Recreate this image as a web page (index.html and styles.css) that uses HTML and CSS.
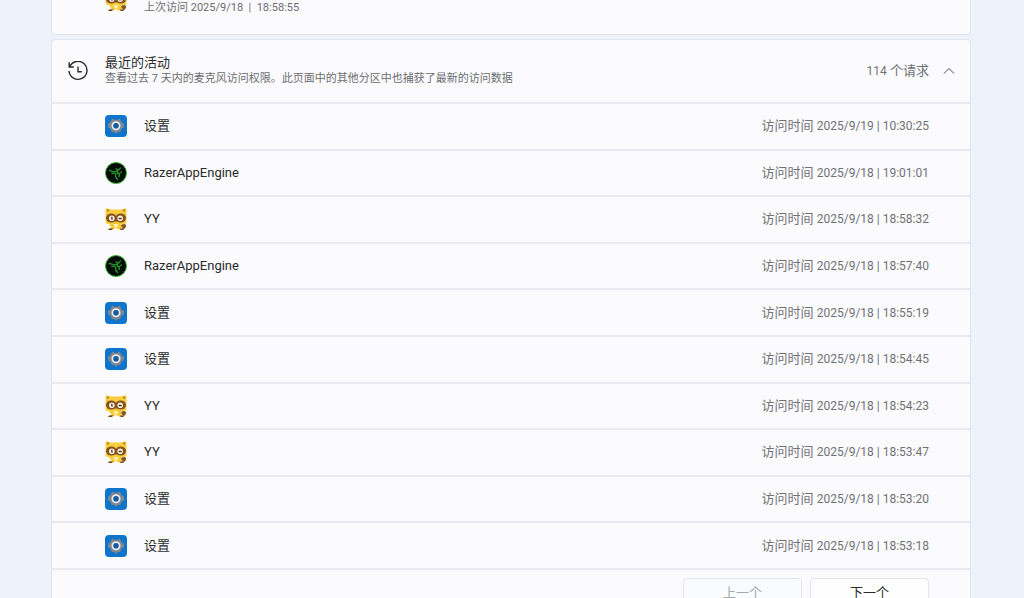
FILE: index.html
```html
<!DOCTYPE html>
<html lang="zh-CN">
<head>
    <meta charset="UTF-8">
    <meta name="viewport" content="width=device-width, initial-scale=1.0">
    <title>麦克风</title>
    <link rel="stylesheet" href="styles.css">
</head>
<body>

<!-- shared icons -->
<svg class="sprite" aria-hidden="true">
    <symbol id="icon-settings" viewBox="0 0 24 24">
        <rect x="1" y="1" width="22" height="22" rx="4" fill="#0f75cc"/>
        <path d="M8.200 4.500l2.300 1.300h3l2.300-1.300 1.700 3.700 2.500 1.300v4l-2.500 1-1.200 3.500h-2.600L12 20l-1.700-2H7.700l-1.200-3.500-2.500-1v-4l2.500-1.300z" fill="#7f868d"/>
        <circle cx="12" cy="11.800" r="4.500" fill="#e6edf4"/>
        <circle cx="12" cy="11.800" r="2.800" fill="#155a9c"/>
    </symbol>
    <symbol id="icon-razer" viewBox="0 0 24 24">
        <circle cx="12" cy="12" r="10.500" fill="#050b06" stroke="#35b52f" stroke-width="1"/>
        <g fill="none" stroke="#24922a" stroke-width="1.400" stroke-linecap="round">
            <path d="M5.500 9.500c2 .3 3.500 1.500 6 1.300 2-.2 3-2 5-3.800"/>
            <path d="M12 8c2 0 1.500 1.500 1.500 3.500s2 1 4-.5"/>
            <path d="M8 12.500c1.500-.5 3-.5 3.500.5s-.5 2 .5 3.500 1.500 1 1.500 2"/>
            <path d="M13.500 12.500c2 .5 2.500 1.500 1.500 3"/>
        </g>
    </symbol>
    <symbol id="icon-yy" viewBox="0 0 24 24">
        <path d="M1.500 3q0-2.300 2-1.500L7 2.500h10l3.500-1q2-.8 2 1.500V15q0 2-2.500 2H4q-2.500 0-2.500-2z" fill="#f9cd3d"/>
        <path d="M2.800 2.600l2.800.5-2.300 2zM21.200 2.600l-2.800.5 2.300 2z" fill="#a9731f"/>
        <path d="M7 16h10l1.500 3-1.500 3.500h-2L12 21l-3 1.500H6L7.500 20 5 18z" fill="#f6ca36"/>
        <path d="M9.500 17h5l-1 3.500h-3z" fill="#fbedaa"/>
        <path d="M17 18.500q3-2.500 5-.5c.5 2-1 4-3 4z" fill="#8a561f"/>
        <path d="M5 21.500l-1 1.500h4l1-1.800zM16 21.500l.5 1.500h3.500l-1-1.500z" fill="#75491e"/>
        <ellipse cx="7.300" cy="11" rx="5.300" ry="4.600" fill="#85501f"/>
        <ellipse cx="16.700" cy="11" rx="5.300" ry="4.600" fill="#85501f"/>
        <circle cx="7.800" cy="11.300" r="2.800" fill="#f8f1df"/>
        <circle cx="16.200" cy="11.300" r="2.800" fill="#f8f1df"/>
        <path d="M7.800 9.800v2h1M14.700 11.500h3" fill="none" stroke="#5a3518" stroke-width="1.300"/>
        <path d="M11 13.500h2l-1 1.500z" fill="#4b2d15"/>
    </symbol>
</svg>

<main class="page">
    <section class="card previous">
        <svg class="app-icon"><use href="#icon-yy"/></svg>
        <p class="last-access">上次访问 2025/9/18 &nbsp;|&nbsp; 18:58:55</p>
    </section>

    <section class="card">
        <header class="card-header">
            <svg class="history-icon" viewBox="0 0 20 20" aria-hidden="true">
                <path d="M1.700 5.800A9 9 0 1 1 1 10M1.200 1.300v4.700h4.700M10 5.500v5.300h3.800"/>
            </svg>
            <div class="heading">
                <h2>最近的活动</h2>
                <p>查看过去 7 天内的麦克风访问权限。此页面中的其他分区中也捕获了最新的访问数据</p>
            </div>
            <span class="count"><span class="digits">114</span> 个请求</span>
            <button class="toggle" type="button" aria-label="收起" aria-expanded="true">
                <svg viewBox="0 0 12 12"><path d="M1 8.500l5-5 5 5"/></svg>
            </button>
        </header>

        <ul class="activity">
            <li><svg class="app-icon"><use href="#icon-settings"/></svg><span class="name">设置</span><span class="time">访问时间 <time class="digits">2025/9/19 | 10:30:25</time></span></li>
            <li><svg class="app-icon"><use href="#icon-razer"/></svg><span class="name">RazerAppEngine</span><span class="time">访问时间 <time class="digits">2025/9/18 | 19:01:01</time></span></li>
            <li><svg class="app-icon"><use href="#icon-yy"/></svg><span class="name">YY</span><span class="time">访问时间 <time class="digits">2025/9/18 | 18:58:32</time></span></li>
            <li><svg class="app-icon"><use href="#icon-razer"/></svg><span class="name">RazerAppEngine</span><span class="time">访问时间 <time class="digits">2025/9/18 | 18:57:40</time></span></li>
            <li><svg class="app-icon"><use href="#icon-settings"/></svg><span class="name">设置</span><span class="time">访问时间 <time class="digits">2025/9/18 | 18:55:19</time></span></li>
            <li><svg class="app-icon"><use href="#icon-settings"/></svg><span class="name">设置</span><span class="time">访问时间 <time class="digits">2025/9/18 | 18:54:45</time></span></li>
            <li><svg class="app-icon"><use href="#icon-yy"/></svg><span class="name">YY</span><span class="time">访问时间 <time class="digits">2025/9/18 | 18:54:23</time></span></li>
            <li><svg class="app-icon"><use href="#icon-yy"/></svg><span class="name">YY</span><span class="time">访问时间 <time class="digits">2025/9/18 | 18:53:47</time></span></li>
            <li><svg class="app-icon"><use href="#icon-settings"/></svg><span class="name">设置</span><span class="time">访问时间 <time class="digits">2025/9/18 | 18:53:20</time></span></li>
            <li><svg class="app-icon"><use href="#icon-settings"/></svg><span class="name">设置</span><span class="time">访问时间 <time class="digits">2025/9/18 | 18:53:18</time></span></li>
        </ul>

        <footer class="pager">
            <button type="button" disabled>上一个</button>
            <button type="button">下一个</button>
        </footer>
    </section>
</main>

</body>
</html>
```
FILE: styles.css
```css
* {
    box-sizing: border-box;
}

body {
    margin: 0;
    height: 100vh;
    overflow: hidden;
    background: #eef3fb;
    color: #2b2b2d;
    font-family: Roboto, "Noto Sans CJK SC", sans-serif;
    font-size: 13px;
    line-height: 16px;
}

h2, p, ul {
    margin: 0;
    padding: 0;
}

svg {
    display: block;
    flex: none;
}

.sprite {
    position: absolute;
    width: 0;
    height: 0;
}

/* the page is scrolled down, so the first card starts above the window */
.page {
    margin: -27px 53px 0 51px;
}

.card {
    border: 1px solid #dfe4eb;
    border-radius: 4px;
    background: #fbfbfe;
}

.previous {
    display: flex;
    align-items: flex-end;
    height: 62px;
    margin-bottom: 4px;
    padding: 0 41px 18px 52px;
}

.app-icon {
    width: 24px;
    height: 24px;
}

.previous .app-icon {
    margin-bottom: 4px;
}

.last-access {
    margin-left: 16px;
    color: #6b6c70;
    font-size: 11px;
}

.card-header {
    display: flex;
    align-items: center;
    height: 62px;
    padding: 0 15px 0 16px;
}

.history-icon {
    width: 20px;
    height: 20px;
    margin-right: 17px;
    fill: none;
    stroke: #2b2b2d;
    stroke-width: 1.4;
}

.heading {
    flex: 1;
}

.heading h2 {
    font-size: 13px;
    font-weight: 400;
}

.heading p {
    color: #6b6c70;
    font-size: 11px;
}

.count,
.time {
    color: #707175;
}

.digits {
    font-size: 12px;
}

.toggle {
    margin-left: 14px;
    padding: 0;
    border: 0;
    background: none;
}

.toggle svg {
    width: 12px;
    height: 12px;
    fill: none;
    stroke: #4b4c50;
    stroke-width: 1;
}

/* ten equal rows */
.activity {
    display: grid;
    grid-auto-rows: 1fr;
    height: 466px;
    list-style: none;
}

.activity li {
    display: flex;
    align-items: center;
    padding: 0 41px 0 52px;
    border-top: 2px solid #e8eaef;
}

.name {
    flex: 1;
    margin-left: 16px;
}

.pager {
    display: flex;
    justify-content: flex-end;
    gap: 8px;
    padding: 8px 41px 16px;
    border-top: 2px solid #e8eaef;
}

.pager button {
    width: 119px;
    height: 30px;
    border: 1px solid #e3e5ea;
    border-radius: 4px;
    background: #fefefe;
    color: #2b2b2d;
    font: inherit;
}

.pager button:disabled {
    background: #fafbfd;
    color: #a5a7ab;
}
```
